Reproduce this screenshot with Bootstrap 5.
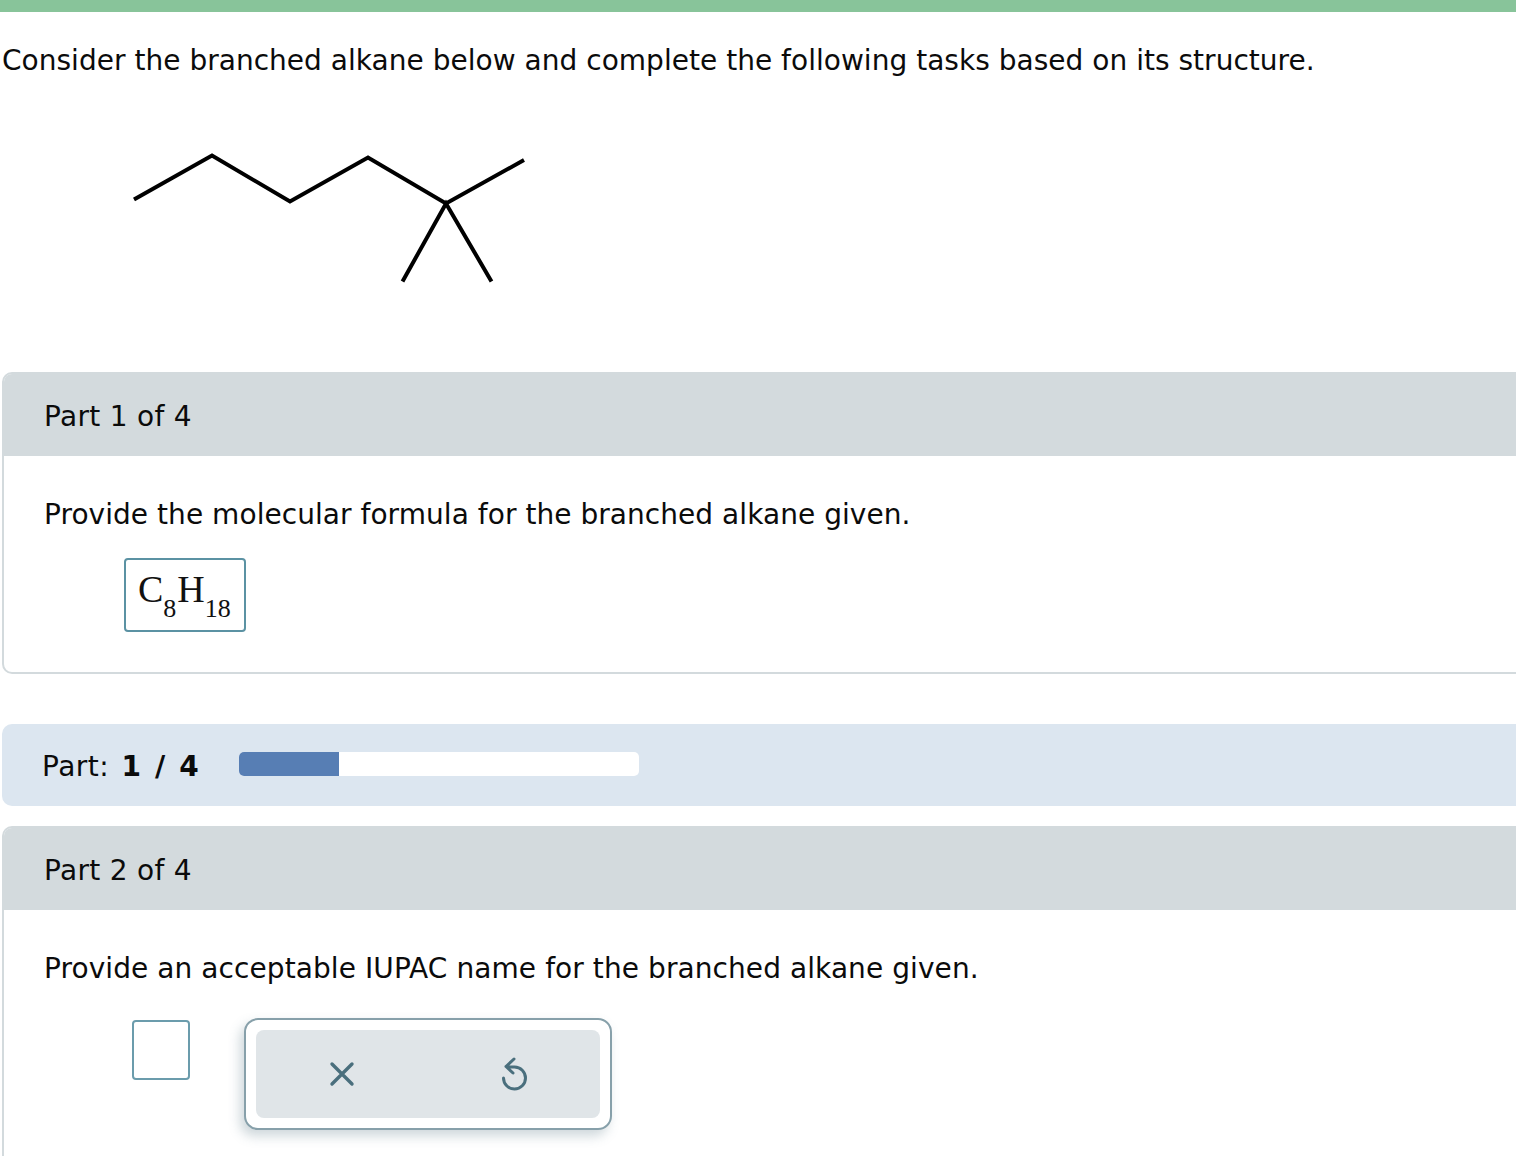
<!DOCTYPE html>
<html lang="en"><head><meta charset="utf-8"><title>Alkane</title>
<link href="https://cdn.jsdelivr.net/npm/bootstrap@5.3.0/dist/css/bootstrap.min.css" rel="stylesheet">
<style>
html,body{height:1156px;overflow:hidden}
body{font-family:"DejaVu Sans",sans-serif;color:#0b0b0b;background:#fff}
.topbar{height:12px;background:#88c49a}
.intro{font-size:28px;line-height:40px;margin:29px 0 0 2px;letter-spacing:.025px}
.mol{display:block;margin-top:0}
.part-box{margin-left:2px;margin-right:-20px;border:2px solid #d3dadd;border-radius:10px;overflow:hidden}
.part-head{height:82px;background:#d3dadd;font-size:28px;padding-left:40px;padding-top:4px;letter-spacing:.3px}
.part-body{padding:39px 0 0 40px}
.prompt{font-size:28px;line-height:40px;letter-spacing:.05px}
.prompt-wide{letter-spacing:.08px}
.box-one{height:302px}
.formula{width:122px;height:74px;margin:23px 0 0 80px;border:2px solid #5b92a3;border-radius:4px;font-family:"Liberation Serif",serif;font-size:38px;line-height:1;padding-left:12px;padding-top:10px;color:#111}
.formula sub{font-size:26px;bottom:-.58em;line-height:0;margin-right:1px;vertical-align:baseline;position:relative}
.progress-panel{height:82px;margin:50px -20px 20px 2px;background:#dce6f0;border-radius:10px;padding-left:40px;font-size:28px;gap:38px}
.part-label{padding-top:3px;letter-spacing:.5px}
.part-label b{letter-spacing:2.1px;font-weight:700;margin-left:3px}
.meter{width:400px;height:24px;background:#fff;border-radius:5px;overflow:hidden;margin-top:-2px}
.meter-fill{height:100%;background:#577eb4}
.box-two{border-bottom:0;border-bottom-left-radius:0;border-bottom-right-radius:0;height:340px}
.answer{margin-top:29px;margin-left:88px;gap:54px}
.blank{width:58px;height:60px;border:2px solid #6b9cac;border-radius:4px;margin-top:2px}
.tools{width:368px;height:112px;border:2px solid #87a0aa;border-radius:14px;padding:10px;background:#fff;box-shadow:-4px 6px 12px rgba(80,110,125,.28)}
.tools-inner{height:100%;background:#e0e5e8;border-radius:8px;padding-right:0}
.tool{width:172px}
</style></head>
<body>
<div class="topbar"></div>
<p class="intro mb-0">Consider the branched alkane below and complete the following tasks based on its structure.</p>
<svg class="mol" width="560" height="291" viewBox="0 81 560 291" aria-label="Skeletal structure of the branched alkane">
<path d="M134 199.500 212 155.500 290 201.500 368 157.500 446 203.500 524 160M402.500 281.500 446 203.500 491.500 281.500" fill="none" stroke="#000" stroke-width="4" stroke-linejoin="miter"/>
</svg>
<section class="part-box box-one">
  <div class="part-head d-flex align-items-center">Part 1 of 4</div>
  <div class="part-body">
    <div class="prompt">Provide the molecular formula for the branched alkane given.</div>
    <div class="formula">C<sub>8</sub>H<sub>18</sub></div>
  </div>
</section>
<div class="progress-panel d-flex align-items-center">
  <div class="part-label">Part: <b>1 / 4</b></div>
  <div class="meter"><div class="meter-fill" style="width:25%"></div></div>
</div>
<section class="part-box box-two">
  <div class="part-head d-flex align-items-center">Part 2 of 4</div>
  <div class="part-body">
    <div class="prompt prompt-wide">Provide an acceptable IUPAC name for the branched alkane given.</div>
    <div class="answer d-flex align-items-start">
      <div class="blank"></div>
      <div class="tools"><div class="tools-inner d-flex align-items-center">
        <div class="tool d-flex justify-content-center"><svg width="28" height="28" viewBox="0 0 28 28"><path d="M4 4 24 24M24 4 4 24" stroke="#4a6f7d" stroke-width="3.400" stroke-linecap="round"/></svg></div>
        <div class="tool d-flex justify-content-center"><svg width="28" height="34" viewBox="0 0 28 34"><path d="M14 2 6 9.500 13 16M6 9.500C8 9.700 11 10 14.500 10A11 11 0 1 1 3.500 21" fill="none" stroke="#4a6f7d" stroke-width="3" stroke-linecap="round" stroke-linejoin="round"/></svg></div>
      </div></div>
    </div>
  </div>
</section>
<script src="https://cdn.jsdelivr.net/npm/bootstrap@5.3.0/dist/js/bootstrap.bundle.min.js"></script>
</body></html>
